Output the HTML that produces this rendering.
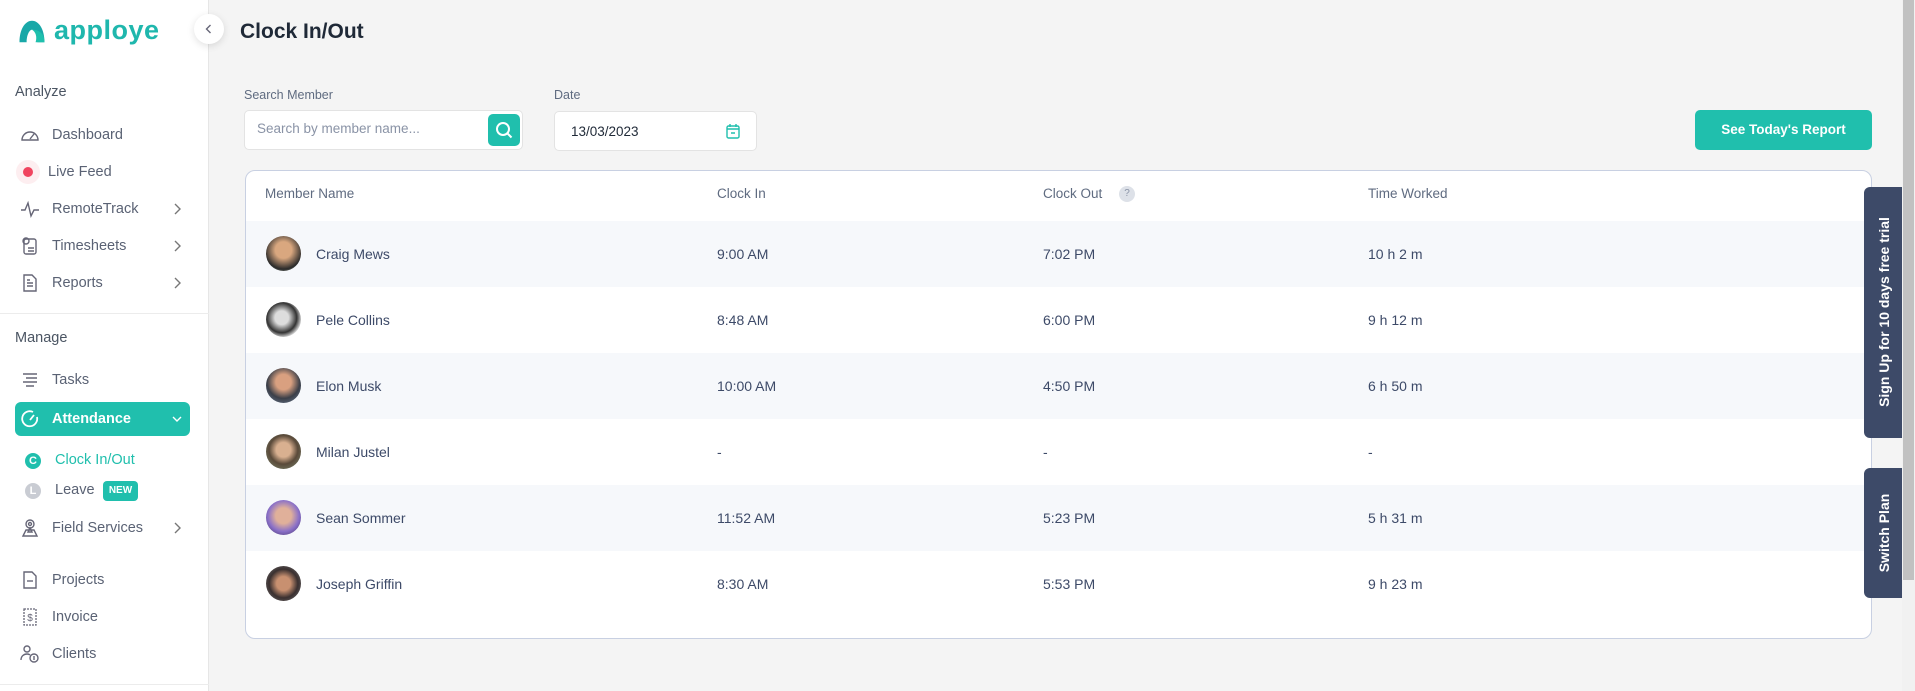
<!DOCTYPE html>
<html><head><meta charset="utf-8"><style>
*{box-sizing:border-box;margin:0;padding:0}
body{width:1915px;height:691px;overflow:hidden;background:#f4f4f4;font-family:"Liberation Sans",sans-serif;color:#3d4a68;position:relative}
.abs{position:absolute}
#side{left:0;top:0;width:209px;height:691px;background:#fff;border-right:1px solid #e6e6e6}
.sec{left:15px;font-size:14.5px;color:#4b5563}
.item{left:20px;font-size:14.5px;color:#5a6274;display:flex;align-items:center;height:20px}
.item svg{width:20px;height:20px;margin-right:12px}
.chev{position:absolute;left:172px;width:10px;height:14px}
.th{top:186px;font-size:13.5px;color:#5f6b80}
.row{left:246px;width:1625px;height:66px}
.cell{font-size:14px;color:#3d4a68}
.av{width:35px;height:35px;border-radius:50%;position:absolute;left:20px;top:15px}
</style></head><body>
<div id="side" class="abs">
 <svg class="abs" style="left:17px;top:19px" width="30" height="25" viewBox="0 0 32 28"><path d="M2 26 C2 12 8 2 16 2 C24 2 30 12 30 26 L22 26 C22 18 19 12 16 12 C13 12 10 18 10 26Z" fill="#19a8a8"/><path d="M16 12 C20 14 22 20 20 26 L30 26 C30 18 26 12 16 12Z" fill="#1fc0ad"/></svg>
 <div class="abs" style="left:54px;top:15px;font-size:27px;font-weight:600;color:#1fb7ad;letter-spacing:0.5px">apploye</div>
 <div class="abs sec" style="top:84px">Analyze</div>
 <div class="abs item" style="top:125px"><svg viewBox="0 0 20 20" fill="none" stroke="#667" stroke-width="1.4"><path d="M2 15a8 8 0 0 1 16 0Z"/><path d="M10 14l4-5"/></svg>Dashboard</div>
 <div class="abs item" style="top:162px;left:16px"><span style="width:24px;height:24px;border-radius:50%;background:#fdeef0;display:inline-flex;align-items:center;justify-content:center;margin-right:8px"><span style="width:10px;height:10px;border-radius:50%;background:#f0445f"></span></span>Live Feed</div>
 <div class="abs item" style="top:199px"><svg viewBox="0 0 20 20" fill="none" stroke="#667" stroke-width="1.4"><path d="M1 11h4l3-7 3 13 3-6h5"/></svg>RemoteTrack</div><svg class="chev" style="top:202px" viewBox="0 0 10 14" fill="none" stroke="#777" stroke-width="1.4"><path d="M3 2l5 5-5 5"/></svg>
 <div class="abs item" style="top:236px"><svg viewBox="0 0 20 20" fill="none" stroke="#667" stroke-width="1.4"><rect x="4" y="3" width="12" height="15" rx="2"/><circle cx="6" cy="5" r="3"/><path d="M8 12h6M8 15h6"/></svg>Timesheets</div><svg class="chev" style="top:239px" viewBox="0 0 10 14" fill="none" stroke="#777" stroke-width="1.4"><path d="M3 2l5 5-5 5"/></svg>
 <div class="abs item" style="top:273px"><svg viewBox="0 0 20 20" fill="none" stroke="#667" stroke-width="1.4"><path d="M4 2h8l4 4v12H4Z"/><path d="M7 10h6M7 13h6M7 7h3"/></svg>Reports</div><svg class="chev" style="top:276px" viewBox="0 0 10 14" fill="none" stroke="#777" stroke-width="1.4"><path d="M3 2l5 5-5 5"/></svg>
 <div class="abs" style="left:0;top:313px;width:209px;border-top:1px solid #ececec"></div>
 <div class="abs sec" style="top:330px">Manage</div>
 <div class="abs item" style="top:370px"><svg viewBox="0 0 20 20" fill="none" stroke="#667" stroke-width="1.5"><path d="M3 4h14M6 8h11M3 12h14M6 16h8"/></svg>Tasks</div>
 <div class="abs" style="left:15px;top:402px;width:175px;height:34px;border-radius:6px;background:#20bfad"></div>
 <div class="abs item" style="top:409px;color:#fff;font-weight:700"><svg viewBox="0 0 20 20" fill="none" stroke="#fff" stroke-width="1.8"><path d="M17 8a7.5 7.5 0 1 1-4-5"/><path d="M10 11l4-5"/></svg>Attendance</div><svg class="abs" style="left:171px;top:413px" width="12" height="12" viewBox="0 0 12 12" fill="none" stroke="#fff" stroke-width="1.4"><path d="M2 4l4 4 4-4"/></svg>
 <div class="abs" style="left:25px;top:453px;width:16px;height:16px;border-radius:50%;background:#20bfad;color:#fff;font-size:11px;font-weight:700;text-align:center;line-height:16px">C</div>
 <div class="abs" style="left:55px;top:452px;font-size:14.5px;color:#20bfad">Clock In/Out</div>
 <div class="abs" style="left:25px;top:483px;width:16px;height:16px;border-radius:50%;background:#c9ccd3;color:#fff;font-size:11px;font-weight:700;text-align:center;line-height:16px">L</div>
 <div class="abs" style="left:55px;top:482px;font-size:14.5px;color:#5a6274">Leave</div>
 <div class="abs" style="left:103px;top:481px;width:35px;height:20px;border-radius:4px;background:#20bfad;color:#fff;font-size:10px;font-weight:700;text-align:center;line-height:20px">NEW</div>
 <div class="abs item" style="top:518px"><svg viewBox="0 0 20 20" fill="none" stroke="#667" stroke-width="1.4"><circle cx="10" cy="6" r="4"/><circle cx="10" cy="6" r="1.5"/><path d="M10 10l-2 4h4zM3 18l3-6h8l3 6Z"/></svg>Field Services</div><svg class="chev" style="top:521px" viewBox="0 0 10 14" fill="none" stroke="#777" stroke-width="1.4"><path d="M3 2l5 5-5 5"/></svg>
 <div class="abs item" style="top:570px"><svg viewBox="0 0 20 20" fill="none" stroke="#667" stroke-width="1.4"><path d="M4 2h8l4 4v12H4Z"/><path d="M7 11h6"/></svg>Projects</div>
 <div class="abs item" style="top:607px"><svg viewBox="0 0 20 20" fill="none" stroke="#667" stroke-width="1.3"><rect x="4" y="2" width="12" height="16" stroke-dasharray="2 1"/><text x="10" y="14" font-size="10" text-anchor="middle" fill="#667" stroke="none">$</text></svg>Invoice</div>
 <div class="abs item" style="top:644px"><svg viewBox="0 0 20 20" fill="none" stroke="#667" stroke-width="1.4"><circle cx="7" cy="5" r="3"/><path d="M1 16c0-4 3-6 6-6 1 0 2 0 3 1"/><circle cx="14" cy="14" r="4"/><path d="M14 12v4"/></svg>Clients</div>
 <div class="abs" style="left:0;top:684px;width:209px;border-top:1px solid #ececec"></div>
</div>
<div class="abs" style="left:194px;top:14px;width:30px;height:30px;border-radius:50%;background:#fff;box-shadow:0 2px 8px rgba(0,0,0,0.12)"><svg width="30" height="30" viewBox="0 0 30 30" fill="none" stroke="#667" stroke-width="1.4"><path d="M16.5 11l-4 4 4 4"/></svg></div>
<div class="abs" style="left:240px;top:20px;font-size:21px;font-weight:700;color:#1f2937">Clock In/Out</div>
<div class="abs" style="left:244px;top:88px;font-size:12.5px;color:#5f6b80">Search Member</div>
<div class="abs" style="left:244px;top:110px;width:279px;height:40px;background:#fff;border:1px solid #e3e3e3;border-radius:5px"></div>
<div class="abs" style="left:257px;top:121px;font-size:13.5px;color:#8a93a6">Search by member name...</div>
<div class="abs" style="left:488px;top:114px;width:32px;height:32px;border-radius:5px;background:#20bfad"><svg width="32" height="32" viewBox="0 0 32 32" fill="none" stroke="#fff" stroke-width="2"><circle cx="15" cy="15" r="6"/><path d="M19.5 19.5l4 4"/></svg></div>
<div class="abs" style="left:554px;top:88px;font-size:12.5px;color:#5f6b80">Date</div>
<div class="abs" style="left:554px;top:111px;width:203px;height:40px;background:#fff;border:1px solid #e3e3e3;border-radius:5px"></div>
<div class="abs" style="left:571px;top:124px;font-size:13.5px;color:#1f2937">13/03/2023</div>
<svg class="abs" style="left:726px;top:123px" width="14" height="16" viewBox="0 0 14 16" fill="none" stroke="#20bfad" stroke-width="1.4"><rect x="1" y="3" width="12" height="12" rx="1.5"/><path d="M1 6h12M4 1v3M10 1v3M5 10h4"/></svg>
<div class="abs" style="left:1695px;top:110px;width:177px;height:40px;border-radius:5px;background:#20bfad;color:#fff;font-size:13.5px;font-weight:700;text-align:center;line-height:40px">See Today's Report</div>
<div class="abs" style="left:245px;top:170px;width:1627px;height:469px;background:#fff;border:1px solid #c8d0e2;border-radius:10px;overflow:hidden">
 <div class="abs" style="left:0;top:50px;width:100%;border-top:1px solid #c8d0e2"></div>
</div>
<div class="abs th" style="left:265px">Member Name</div>
<div class="abs th" style="left:717px">Clock In</div>
<div class="abs th" style="left:1043px">Clock Out</div>
<div class="abs" style="left:1119px;top:186px;width:16px;height:16px;border-radius:50%;background:#dde1e8;color:#8a93a6;font-size:10px;text-align:center;line-height:16px">?</div>
<div class="abs th" style="left:1368px">Time Worked</div>

<div class="abs row" style="top:221px;background:#f6f8fb"><div class="av" style="background:radial-gradient(circle at 50% 40%,#d9a77f 30%,#2a2a2a 70%,#c9d7c4)"></div><div class="abs cell" style="left:70px;top:25px">Craig Mews</div><div class="abs cell" style="left:471px;top:25px">9:00 AM</div><div class="abs cell" style="left:797px;top:25px">7:02 PM</div><div class="abs cell" style="left:1122px;top:25px">10 h 2 m</div></div>
<div class="abs row" style="top:287px"><div class="av" style="background:radial-gradient(circle at 45% 45%,#ddd 25%,#333 55%,#eee 75%)"></div><div class="abs cell" style="left:70px;top:25px">Pele Collins</div><div class="abs cell" style="left:471px;top:25px">8:48 AM</div><div class="abs cell" style="left:797px;top:25px">6:00 PM</div><div class="abs cell" style="left:1122px;top:25px">9 h 12 m</div></div>
<div class="abs row" style="top:353px;background:#f6f8fb"><div class="av" style="background:radial-gradient(circle at 50% 40%,#d9a080 28%,#3b3f48 60%,#6c7f99)"></div><div class="abs cell" style="left:70px;top:25px">Elon Musk</div><div class="abs cell" style="left:471px;top:25px">10:00 AM</div><div class="abs cell" style="left:797px;top:25px">4:50 PM</div><div class="abs cell" style="left:1122px;top:25px">6 h 50 m</div></div>
<div class="abs row" style="top:419px"><div class="av" style="background:radial-gradient(circle at 50% 45%,#d9b090 28%,#5a4a3a 55%,#7b8a70)"></div><div class="abs cell" style="left:70px;top:25px">Milan Justel</div><div class="abs cell" style="left:471px;top:25px">-</div><div class="abs cell" style="left:797px;top:25px">-</div><div class="abs cell" style="left:1122px;top:25px">-</div></div>
<div class="abs row" style="top:485px;background:#f6f8fb"><div class="av" style="background:radial-gradient(circle at 50% 45%,#e0b09a 30%,#8a70c8 60%,#3a2a5a)"></div><div class="abs cell" style="left:70px;top:25px">Sean Sommer</div><div class="abs cell" style="left:471px;top:25px">11:52 AM</div><div class="abs cell" style="left:797px;top:25px">5:23 PM</div><div class="abs cell" style="left:1122px;top:25px">5 h 31 m</div></div>
<div class="abs row" style="top:551px"><div class="av" style="background:radial-gradient(circle at 50% 50%,#c89070 28%,#3a3030 58%,#777)"></div><div class="abs cell" style="left:70px;top:25px">Joseph Griffin</div><div class="abs cell" style="left:471px;top:25px">8:30 AM</div><div class="abs cell" style="left:797px;top:25px">5:53 PM</div><div class="abs cell" style="left:1122px;top:25px">9 h 23 m</div></div>

<div class="abs" style="left:1864px;top:187px;width:40px;height:251px;background:#3d4a68;border-radius:6px 0 0 6px"></div>
<div class="abs" style="left:1884px;top:312px;transform:translate(-50%,-50%) rotate(-90deg);white-space:nowrap;color:#fff;font-size:14px;font-weight:700">Sign Up for 10 days free trial</div>
<div class="abs" style="left:1864px;top:468px;width:40px;height:130px;background:#3d4a68;border-radius:6px 0 0 6px"></div>
<div class="abs" style="left:1884px;top:533px;transform:translate(-50%,-50%) rotate(-90deg);white-space:nowrap;color:#fff;font-size:14px;font-weight:700">Switch Plan</div>
<div class="abs" style="left:1902px;top:0;width:13px;height:691px;background:#f1f1f1"></div>
<div class="abs" style="left:1903px;top:0;width:11px;height:580px;background:#c1c1c1"></div>
</body></html>
